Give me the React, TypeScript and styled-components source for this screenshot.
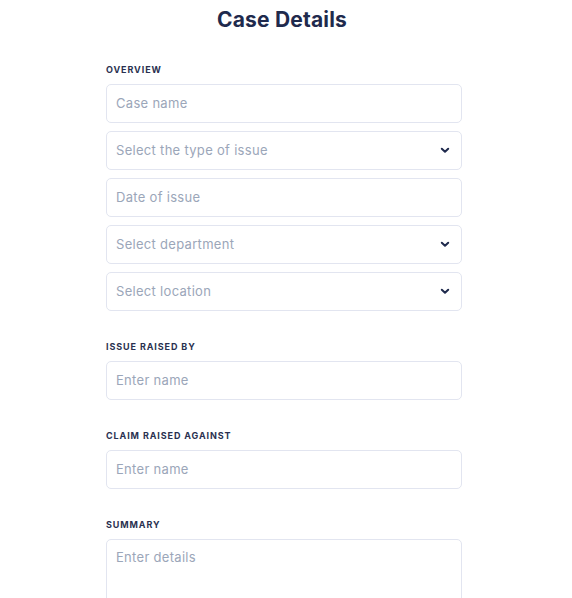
import React from 'react';
import styled, { createGlobalStyle } from 'styled-components';

const GlobalStyle = createGlobalStyle`
  body {
    margin: 0;
    background: #ffffff;
    font-family: 'Inter', 'Noto Sans', sans-serif;
  }
`;

const Page = styled.div`
  width: 356px;
  margin: 0 auto 0 106px;
  padding-top: 8px;
  display: flex;
  flex-direction: column;
`;

const Title = styled.h1`
  margin: 0 0 33px;
  font-size: 21px;
  line-height: 24px;
  font-weight: 700;
  color: #1f2a4d;
  text-align: center;
  letter-spacing: 0.2px;
  transform: translateX(-2px);
`;

const Section = styled.section`
  display: flex;
  flex-direction: column;
  & + & {
    margin-top: 31px;
  }
`;

const Label = styled.div`
  font-size: 9px;
  line-height: 10px;
  font-weight: 700;
  letter-spacing: 0.9px;
  text-transform: uppercase;
  color: #2a3150;
  margin-bottom: 9px;
`;

const Fields = styled.div`
  display: flex;
  flex-direction: column;
  gap: 8px;
`;

const Box = styled.div<{ $tall?: boolean }>`
  box-sizing: border-box;
  height: ${p => (p.$tall ? '110px' : '39px')};
  border: 1px solid #e2e5f0;
  border-radius: 5px;
  padding: ${p => (p.$tall ? '9px 9px' : '0 9px 2px')};
  display: flex;
  align-items: ${p => (p.$tall ? 'flex-start' : 'center')};
  justify-content: space-between;
  background: #fff;
`;

const Placeholder = styled.span`
  font-size: 13px;
  color: #9ba6b9;
  letter-spacing: 0.3px;
`;

const Chevron = styled.svg`
  width: 10px;
  height: 7px;
  margin-right: 2px;
  margin-top: 2px;
`;

const Field = ({ text, select, tall }: { text: string; select?: boolean; tall?: boolean }) => (
  <Box $tall={tall}>
    <Placeholder>{text}</Placeholder>
    {select && (
      <Chevron viewBox="0 0 10 7">
        <path d="M1.8 1.8 L5 4.8 L8.2 1.8" fill="none" stroke="#1f2a4d" strokeWidth="2" strokeLinecap="round" strokeLinejoin="round" />
      </Chevron>
    )}
  </Box>
);

export default function App() {
  return (
    <>
      <GlobalStyle />
      <Page>
        <Title>Case Details</Title>
        <Section>
          <Label>Overview</Label>
          <Fields>
            <Field text="Case name" />
            <Field text="Select the type of issue" select />
            <Field text="Date of issue" />
            <Field text="Select department" select />
            <Field text="Select location" select />
          </Fields>
        </Section>
        <Section>
          <Label>Issue raised by</Label>
          <Fields>
            <Field text="Enter name" />
          </Fields>
        </Section>
        <Section>
          <Label>Claim raised against</Label>
          <Fields>
            <Field text="Enter name" />
          </Fields>
        </Section>
        <Section>
          <Label>Summary</Label>
          <Fields>
            <Field text="Enter details" tall />
          </Fields>
        </Section>
      </Page>
    </>
  );
}
